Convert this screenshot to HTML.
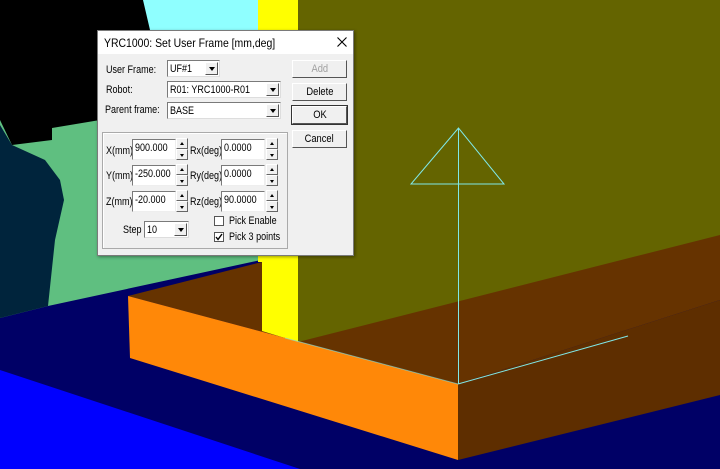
<!DOCTYPE html>
<html><head><meta charset="utf-8"><style>
*{margin:0;padding:0;box-sizing:border-box}
body{width:720px;height:469px;position:relative;overflow:hidden;background:#000066;font-family:"Liberation Sans",sans-serif;font-size:11px;color:#000}
.a{position:absolute}
#dlg{left:97px;top:30px;width:257px;height:226px;background:#f0f0f0;border:1px solid #7a7a7a;box-shadow:1px 1px 3px rgba(0,0,0,.4)}
#tb{left:0;top:0;width:255px;height:23px;background:#fff}
.lbl{position:absolute;white-space:nowrap;transform:scaleX(.82);transform-origin:0 0}
.cb{position:absolute;background:#fff;border:1px solid #7a7a7a;border-right-color:#ddd;border-bottom-color:#ddd;height:17px}
.cb span,.ed span{position:absolute;left:2px;top:2px;white-space:nowrap;transform:scaleX(.82);transform-origin:0 0}
.dd{position:absolute;right:1px;top:1px;width:13px;height:13px;background:#f0f0f0;border:1px solid #fff;border-right-color:#555;border-bottom-color:#555}
.dd:after{content:"";position:absolute;left:3px;top:4px;border-left:3px solid transparent;border-right:3px solid transparent;border-top:4px solid #000}
.btn{position:absolute;left:194px;width:55px;height:18px;background:#f0f0f0;border:1px solid #fff;border-right-color:#555;border-bottom-color:#555;text-align:center;line-height:16px}
.btn span{display:inline-block;transform:scaleX(.85)}
.ed{position:absolute;background:#fff;border:1px solid #7a7a7a;border-right-color:#eee;border-bottom-color:#eee;width:44px;height:21px}
.sp{position:absolute;width:12px;height:11px;background:#f0f0f0;border:1px solid #fff;border-right-color:#666;border-bottom-color:#666}
.up:after{content:"";position:absolute;left:3px;top:3px;border-left:2px solid transparent;border-right:2px solid transparent;border-bottom:3px solid #000}
.dn:after{content:"";position:absolute;left:3px;top:4px;border-left:2px solid transparent;border-right:2px solid transparent;border-top:3px solid #000}
.chk{position:absolute;width:10px;height:10px;background:#fff;border:1px solid #555}
</style></head><body>
<svg class="a" style="left:0;top:0" width="720" height="469">
<rect x="0" y="0" width="270" height="160" fill="#000"/>
<polygon points="143,0 258,0 258,30 150,30" fill="#8fffff"/>
<polygon points="0,120 12,145 52,140 52,128 100,120 270,120 270,258 48,306 0,318" fill="#5fbf80"/>
<polygon points="0,125 12,145 45,160 60,180 64,200 55,240 48,306 0,318" fill="#00243c"/>
<polygon points="0,370 300,469 0,469" fill="#0000ff"/>
<polygon points="128,296 262,262 720,180 720,300 458,384" fill="#663300"/>
<polygon points="458,384 720,300 720,395 458,460" fill="#5e2e00"/>
<polygon points="258,0 298,0 298,342 262,331 262,262 258,262" fill="#ffff00"/>
<polygon points="298,0 720,0 720,235 298,342" fill="#646400"/>
<polygon points="128,296 458,384 458,460 130,358" fill="#ff8808"/>
<g stroke="#80e8e8" stroke-width="1" fill="none">
<line x1="458.5" y1="128" x2="458.5" y2="384"/>
<polygon points="458.5,128 411,184 504,184"/>
<line x1="458" y1="384" x2="628" y2="336"/>
<line x1="285" y1="338" x2="458" y2="384" stroke-opacity=".6"/>
</g>
</svg>
<div id="dlg" class="a">
<div id="tb" class="a"></div>
<div class="lbl" style="left:6px;top:5px;font-size:12px;transform:scaleX(.87)">YRC1000: Set User Frame [mm,deg]</div>
<svg class="a" style="left:239px;top:6px" width="10" height="10"><path d="M0.5 0.5L9.5 9.5M9.5 0.5L0.5 9.5" stroke="#000" stroke-width="1.1"/></svg>
<div class="lbl" style="left:8px;top:33px">User Frame:</div>
<div class="lbl" style="left:8px;top:53px">Robot:</div>
<div class="lbl" style="left:7px;top:73px">Parent frame:</div>
<div class="cb" style="left:69px;top:29px;width:53px"><span>UF#1</span><div class="dd"></div></div>
<div class="cb" style="left:69px;top:50px;width:114px"><span>R01: YRC1000-R01</span><div class="dd"></div></div>
<div class="cb" style="left:69px;top:71px;width:114px"><span>BASE</span><div class="dd"></div></div>
<div class="btn" style="top:29px;color:#a0a0a0"><span>Add</span></div>
<div class="btn" style="top:52px"><span>Delete</span></div>
<div class="btn" style="top:75px;outline:1px solid #333"><span>OK</span></div>
<div class="btn" style="top:99px"><span>Cancel</span></div>
<div class="a" style="left:4px;top:101px;width:186px;height:117px;border:1px solid #aaa;box-shadow:inset 1px 1px 0 #fff"></div>
<div class="lbl" style="left:8px;top:114px">X(mm)</div>
<div class="lbl" style="left:8px;top:139px">Y(mm)</div>
<div class="lbl" style="left:8px;top:165px">Z(mm)</div>
<div class="lbl" style="left:92px;top:114px">Rx(deg)</div>
<div class="lbl" style="left:92px;top:139px">Ry(deg)</div>
<div class="lbl" style="left:92px;top:165px">Rz(deg)</div>
<div class="ed" style="left:34px;top:108px"><span>900.000</span></div>
<div class="ed" style="left:34px;top:134px"><span>-250.000</span></div>
<div class="ed" style="left:34px;top:160px"><span>-20.000</span></div>
<div class="ed" style="left:123px;top:108px"><span>0.0000</span></div>
<div class="ed" style="left:123px;top:134px"><span>0.0000</span></div>
<div class="ed" style="left:123px;top:160px"><span>90.0000</span></div>
<div class="sp up" style="left:78px;top:107px"></div><div class="sp dn" style="left:78px;top:118px"></div>
<div class="sp up" style="left:78px;top:133px"></div><div class="sp dn" style="left:78px;top:144px"></div>
<div class="sp up" style="left:78px;top:159px"></div><div class="sp dn" style="left:78px;top:170px"></div>
<div class="sp up" style="left:168px;top:107px"></div><div class="sp dn" style="left:168px;top:118px"></div>
<div class="sp up" style="left:168px;top:133px"></div><div class="sp dn" style="left:168px;top:144px"></div>
<div class="sp up" style="left:168px;top:159px"></div><div class="sp dn" style="left:168px;top:170px"></div>
<div class="lbl" style="left:25px;top:193px">Step</div>
<div class="cb" style="left:46px;top:190px;width:45px"><span>10</span><div class="dd"></div></div>
<div class="chk" style="left:116px;top:185px"></div>
<div class="lbl" style="left:131px;top:184px">Pick Enable</div>
<div class="chk" style="left:116px;top:201px"><svg width="8" height="8" style="position:absolute;left:0;top:0"><path d="M1 4L3 6.5L7 1" stroke="#000" stroke-width="1.4" fill="none"/></svg></div>
<div class="lbl" style="left:131px;top:200px">Pick 3 points</div>
</div>
</body></html>
